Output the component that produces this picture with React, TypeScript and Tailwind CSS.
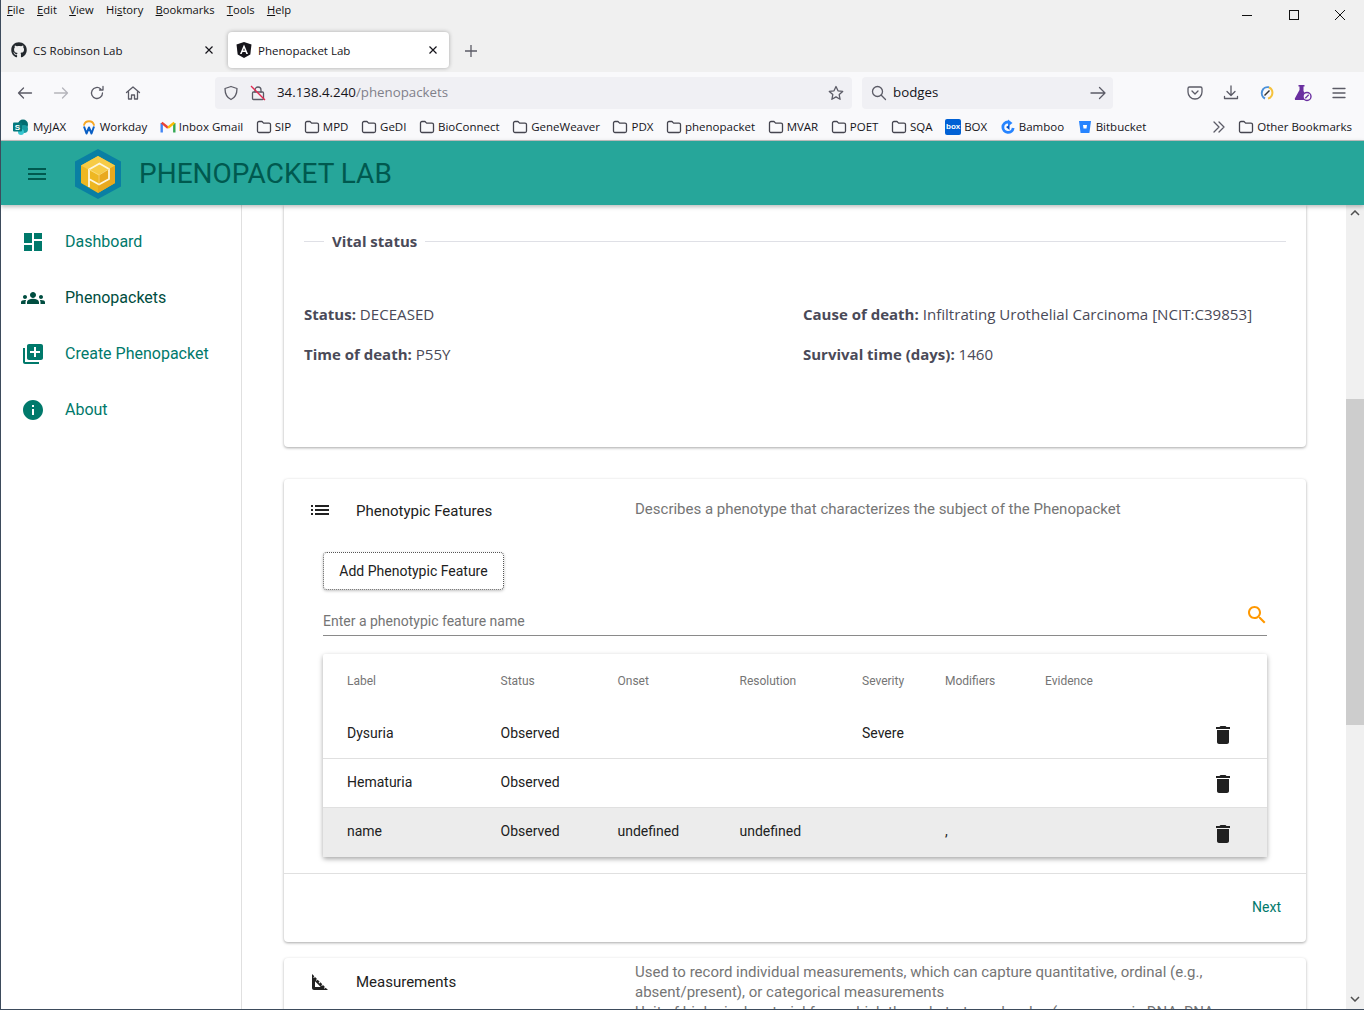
import React from "react";
import { FaGithub } from "react-icons/fa";

const P = ({ d, className = "", vb = "0 0 24 24" }: { d: string; className?: string; vb?: string }) => (
  <svg viewBox={vb} className={className} fill="currentColor"><path d={d} /></svg>
);

const ICONS = {
  dashboard: "M3 13h8V3H3v10zm0 8h8v-6H3v6zm10 0h8V11h-8v10zm0-18v6h8V3h-8z",
  groups: "M12 12.75c1.63 0 3.07.39 4.24.9 1.08.48 1.76 1.56 1.76 2.73V18H6v-1.61c0-1.18.68-2.26 1.76-2.73 1.17-.52 2.61-.91 4.24-.91zM4 13c1.1 0 2-.9 2-2s-.9-2-2-2-2 .9-2 2 .9 2 2 2zm1.13 1.1c-.37-.06-.74-.1-1.13-.1-.99 0-1.93.21-2.78.58C.48 14.9 0 15.62 0 16.43V18h4.5v-1.61c0-.83.23-1.61.63-2.29zM20 13c1.1 0 2-.9 2-2s-.9-2-2-2-2 .9-2 2 .9 2 2 2zm4 3.43c0-.81-.48-1.53-1.22-1.85-.85-.37-1.79-.58-2.78-.58-.39 0-.76.04-1.13.1.4.68.63 1.46.63 2.29V18H24v-1.57zM12 6c1.66 0 3 1.34 3 3s-1.34 3-3 3-3-1.34-3-3 1.34-3 3-3z",
  add: "M4 6H2v14c0 1.1.9 2 2 2h14v-2H4V6zm16-4H8c-1.1 0-2 .9-2 2v12c0 1.1.9 2 2 2h12c1.1 0 2-.9 2-2V4c0-1.1-.9-2-2-2zm-1 9h-4v4h-2v-4H9V9h4V5h2v4h4v2z",
  info: "M12 2C6.48 2 2 6.48 2 12s4.48 10 10 10 10-4.48 10-10S17.52 2 12 2zm1 15h-2v-6h2v6zm0-8h-2V7h2v2z",
  del: "M6 19c0 1.1.9 2 2 2h8c1.1 0 2-.9 2-2V7H6v12zM19 4h-3.5l-1-1h-5l-1 1H5v2h14V4z",
  list: "M3 13h2v-2H3v2zm0 4h2v-2H3v2zm0-8h2V7H3v2zm4 4h14v-2H7v2zm0 4h14v-2H7v2zM7 7v2h14V7H7z",
  search: "M15.5 14h-.79l-.28-.27C15.41 12.59 16 11.11 16 9.5 16 5.91 13.09 3 9.5 3S3 5.91 3 9.5 5.91 16 9.5 16c1.61 0 3.09-.59 4.23-1.57l.27.28v.79l5 4.99L20.49 19l-4.99-5zm-6 0C7.01 14 5 11.99 5 9.5S7.01 5 9.5 5 14 7.01 14 9.5 11.99 14 9.5 14z",
  foot: "M17.66 17.66l-1.06 1.06-.71-.71 1.06-1.06-1.94-1.94-1.06 1.06-.71-.71 1.06-1.06-1.94-1.94-1.06 1.06-.71-.71 1.06-1.06L9.7 9.7l-1.06 1.06-.71-.71 1.06-1.06-1.94-1.94-1.06 1.06-.71-.71 1.06-1.06L4 4v14c0 1.1.9 2 2 2h14l-2.34-2.34zM7 17v-5.76L12.76 17H7z",
};

const S = ({ children, className = "", vb = "0 0 16 16" }: { children: React.ReactNode; className?: string; vb?: string }) => (
  <svg viewBox={vb} className={className} fill="none" stroke="currentColor" strokeWidth="1.3" strokeLinecap="round" strokeLinejoin="round">{children}</svg>
);

const Folder = () => (
  <S className="w-4 h-4 shrink-0 text-[#45454f]">
    <path d="M1.5 4a1.5 1.5 0 0 1 1.5-1.5h3l1.6 1.6H13A1.5 1.5 0 0 1 14.5 5.6V12A1.5 1.5 0 0 1 13 13.5H3A1.5 1.5 0 0 1 1.5 12z" />
  </S>
);

const Bm = ({ icon, label, extra = "" }: { icon?: React.ReactNode; label: string; extra?: string }) => (
  <div className={`flex items-center gap-[3px] shrink-0 ${extra}`}>
    {icon ?? <Folder />}
    <span className="text-[11.5px] leading-none text-[#15141a]">{label}</span>
  </div>
);

const MyJax = () => (
  <svg viewBox="0 0 16 16" className="w-4 h-4 shrink-0">
    <circle cx="10" cy="5.5" r="5" fill="#036c70" />
    <circle cx="11" cy="10" r="4" fill="#1a9ba1" />
    <circle cx="8" cy="13" r="3" fill="#37c6d0" />
    <rect x="0" y="3.5" width="9" height="9" rx="1" fill="#03787c" />
    <text x="4.5" y="10.8" textAnchor="middle" fontSize="8" fontWeight="700" fill="#fff" fontFamily="Liberation Sans, sans-serif">S</text>
  </svg>
);
const Workday = () => (
  <svg viewBox="0 0 16 16" className="w-4 h-4 shrink-0" fill="none">
    <path d="M3 6a5.2 5.2 0 0 1 10 0" stroke="#f5a623" strokeWidth="1.8" strokeLinecap="round" />
    <path d="M3 7.500l2.500 7 2.500-6 2.500 6 2.500-7" stroke="#0a5fc4" strokeWidth="2" strokeLinejoin="round" />
  </svg>
);
const Gmail = () => (
  <svg viewBox="0 0 16 16" className="w-4 h-4 shrink-0" fill="none">
    <path d="M1.7 13.500V4" stroke="#4285f4" strokeWidth="2.4" />
    <path d="M14.3 13.500V4" stroke="#34a853" strokeWidth="2.4" />
    <path d="M1.700 3.600L8 8.800" stroke="#ea4335" strokeWidth="2.4" />
    <path d="M14.300 3.600L8 8.800" stroke="#fbbc04" strokeWidth="2.4" />
  </svg>
);
const BoxLogo = () => (
  <div className="w-4 h-4 shrink-0 rounded-[2px] bg-[#0061d5] flex items-center justify-center text-white text-[8px] font-bold leading-none font-['Liberation_Sans',sans-serif]">box</div>
);
const Bamboo = () => (
  <svg viewBox="0 0 16 16" className="w-4 h-4 shrink-0" fill="none">
    <path d="M8 3a5.200 5.200 0 1 0 5.200 6" stroke="#2684ff" strokeWidth="2.8" />
    <path d="M8 0.500l4.500 3.500L8 7.500z" fill="#2684ff" />
    <path d="M6 8l3.500-2v5z" fill="#0052cc" />
  </svg>
);
const Bitbucket = () => (
  <svg viewBox="0 0 16 16" className="w-4 h-4 shrink-0">
    <path d="M2 2h12l-1.600 12H3.600z" fill="#2684ff" />
    <path d="M6 6h4l-.5 3.500h-3z" fill="#fff" />
  </svg>
);

const Logo = () => (
  <svg viewBox="0 0 46 50" className="w-[46px] h-[50px] shrink-0">
    <polygon points="23,0 46,12.500 46,37.500 23,50 0,37.500 0,12.500" fill="#0a7fa3" />
    <polygon points="23,7 40,16.500 40,34 23,44 6,34 6,16.500" fill="#eeb722" />
    <polygon points="23,26 40,16.500 40,34 23,44" fill="#e9a91e" />
    <polygon points="23,26 6,16.500 23,7 40,16.500" fill="#f7cb45" />
    <path d="M14 38V20.500l10.500-6 9.500 5.500v10l-10 5.500-10-5.500" fill="none" stroke="#fdf6dc" strokeWidth="1.800" />
    <path d="M14 20.500l10 5.500 10-6M24 26v9.500" fill="none" stroke="#f9dd80" strokeWidth="0.800" />
  </svg>
);

const AngularIcon = () => (
  <svg viewBox="0 0 16 16" className="w-4 h-4 shrink-0">
    <polygon points="8,0 15.500,2.600 14.300,12.400 8,16 1.700,12.400 0.500,2.600" fill="#15141a" />
    <path d="M8 2.600L4 12h1.700l.8-2h3l.8 2H12zM7.100 8.600L8 6.300l.9 2.300z" fill="#fff" />
  </svg>
);

const WIDTHS = ["w-[177.5px] pl-6", "w-[117px]", "w-[122px]", "w-[122.5px]", "w-[83px]", "w-[100px]", "w-[100px]"];

const Tr = ({ cols, shade, border }: { cols: string[]; shade?: boolean; border?: boolean }) => (
  <div className={`relative flex items-center h-[49px] pb-[2px] text-[14px] text-[#212121] ${shade ? "bg-[#ececec]" : ""} ${border ? "border-b border-[#e0e0e0]" : ""}`}>
    {cols.map((c, i) => (
      <div key={i} className={WIDTHS[i]}>{c}</div>
    ))}
    <P d={ICONS.del} className="w-6 h-6 ml-auto mr-[32px] mt-[4px] text-[#212121]" />
  </div>
);

const Nav = ({ d, label, cls }: { d: string; label: string; cls: string }) => (
  <div className="flex items-center h-14">
    <div className="w-[64px] flex justify-center">
      <P d={d} className={`w-6 h-6 ${cls}`} />
    </div>
    <span className={`text-[16px] ${cls}`}>{label}</span>
  </div>
);

const bookmarks: { label: string; icon?: React.ReactNode; extra?: string }[] = [
  { label: "MyJAX", icon: <MyJax />, extra: "gap-[4px]" },
  { label: "Workday", icon: <Workday />, extra: "ml-[2px]" },
  { label: "Inbox Gmail", icon: <Gmail /> },
  { label: "SIP" }, { label: "MPD" }, { label: "GeDI" }, { label: "BioConnect" }, { label: "GeneWeaver" },
  { label: "PDX" }, { label: "phenopacket" }, { label: "MVAR" }, { label: "POET" }, { label: "SQA" },
  { label: "BOX", icon: <BoxLogo /> },
  { label: "Bamboo", icon: <Bamboo /> },
  { label: "Bitbucket", icon: <Bitbucket /> },
];

export default function App() {
  return (
    <div className="w-[1364px] h-[1010px] overflow-hidden flex flex-col bg-white border-l border-b border-[#3d4b5c] font-['Roboto',sans-serif]">
      {/* title + menu */}
      <div className="h-[72px] bg-[#f0f0f0] shrink-0 flex flex-col font-['Open_Sans',sans-serif]">
        <div className="h-[32px] flex items-start relative">
          <div className="flex gap-[12.300px] pl-[6px] pt-[1px] text-[11.200px] leading-[17px] text-[#111]">
            <span><u>F</u>ile</span>
            <span><u>E</u>dit</span>
            <span><u>V</u>iew</span>
            <span>Hi<u>s</u>tory</span>
            <span><u>B</u>ookmarks</span>
            <span><u>T</u>ools</span>
            <span><u>H</u>elp</span>
          </div>
          <div className="ml-auto flex items-center pt-[9px] pr-[18px] gap-[34.500px] text-[#111]">
            <svg viewBox="0 0 12 12" className="w-3 h-3" fill="none" stroke="currentColor"><path d="M1 6.500h10" /></svg>
            <svg viewBox="0 0 12 12" className="w-3 h-3" fill="none" stroke="currentColor"><rect x="1.500" y="1.500" width="9" height="9" /></svg>
            <svg viewBox="0 0 12 12" className="w-3 h-3" fill="none" stroke="currentColor"><path d="M1 1l10 10M11 1L1 11" /></svg>
          </div>
        </div>
        <div className="flex items-start">
          <div className="w-[222px] h-[36px] flex items-center pl-[10px] text-[11.500px] text-[#15141a]">
            <FaGithub className="w-4 h-4 mr-[6px] text-[#24292e]" />
            <span className="mt-[1px]">CS Robinson Lab</span>
            <svg viewBox="0 0 12 12" className="w-3 h-3 ml-auto mr-[8px]" fill="none" stroke="#15141a" strokeWidth="1.200"><path d="M2.500 2.500l7 7M9.500 2.500l-7 7" /></svg>
          </div>
          <div className="ml-[5px] w-[221px] h-[36px] bg-white rounded-[4px] shadow-[0_0_4px_rgba(0,0,0,0.3)] flex items-center pl-2 text-[11.500px] text-[#15141a]">
            <AngularIcon />
            <span className="ml-[6px] mt-[1px]">Phenopacket Lab</span>
            <svg viewBox="0 0 12 12" className="w-3 h-3 ml-auto mr-[10px]" fill="none" stroke="#15141a" strokeWidth="1.200"><path d="M2.500 2.500l7 7M9.500 2.500l-7 7" /></svg>
          </div>
          <svg viewBox="0 0 16 16" className="w-4 h-4 ml-[14px] mt-[11px]" fill="none" stroke="#5b5b66" strokeWidth="1.300"><path d="M8 2v12M2 8h12" /></svg>
        </div>
      </div>

      {/* nav */}
      <div className="h-[41px] bg-[#f9f9fb] shrink-0 flex items-center font-['Open_Sans',sans-serif]">
        <div className="w-[214px] flex items-center pl-4 gap-[20px] text-[#5b5b66]">
          <S className="w-4 h-4"><path d="M14.500 8h-13M6.500 3l-5 5 5 5" /></S>
          <S className="w-4 h-4 text-[#b5b5bb]"><path d="M1.500 8h13M9.500 3l5 5-5 5" /></S>
          <S className="w-4 h-4"><path d="M13.500 8a5.500 5.500 0 1 1-1.800-4.100M14 1.500v3.500h-3.500" /></S>
          <S className="w-4 h-4"><path d="M1.500 7.500L8 2l6.500 5.500M3.500 6.500V14h3v-4h3v4h3V6.500" /></S>
        </div>
        <div className="w-[637px] h-[32px] rounded-[4px] bg-[#f0f0f4] flex items-center pl-[8px] pr-2 text-[#5b5b66]">
          <S className="w-4 h-4 shrink-0"><path d="M8 1.500l6 2c0 5.500-1.500 9-6 11-4.500-2-6-5.500-6-11z" /></S>
          <span className="relative w-4 h-4 ml-[11px] shrink-0">
            <S className="w-4 h-4"><rect x="2.500" y="7" width="11" height="7.500" rx="1" /><path d="M5 7V5a3 3 0 0 1 6 0v2" /></S>
            <svg viewBox="0 0 16 16" className="absolute inset-0 w-4 h-4" fill="none" stroke="#e22850" strokeWidth="1.300"><path d="M1 1l14 14" /></svg>
          </span>
          <span className="ml-[11px] mt-[1px] text-[13.300px] text-[#15141a]">34.138.4.240<span className="text-[#80808a]">/phenopackets</span></span>
          <S className="w-4 h-4 ml-auto"><path d="M8 1.500l2 4.300 4.700.6-3.500 3.200.9 4.700L8 11.900l-4.100 2.400.9-4.700L1.300 6.400 6 5.800z" /></S>
        </div>
        <div className="ml-[10px] w-[251px] h-[32px] rounded-[4px] bg-[#f0f0f4] flex items-center pl-[9px] pr-[7px] text-[#5b5b66]">
          <S className="w-4 h-4 shrink-0"><circle cx="6.500" cy="6.500" r="5" /><path d="M10.300 10.300l4.200 4.200" /></S>
          <span className="ml-[6px] mt-[1px] text-[13.300px] text-[#15141a]">bodges</span>
          <S className="w-4 h-4 ml-auto"><path d="M1 8h14M9.500 2.500L15 8l-5.500 5.500" /></S>
        </div>
        <div className="flex items-center ml-[74px] gap-[20px] text-[#5b5b66]">
          <S className="w-4 h-4"><path d="M2.500 2h11A1.500 1.500 0 0 1 15 3.500V7a7 7 0 0 1-14 0V3.500A1.500 1.500 0 0 1 2.500 2zM5 6l3 3 3-3" /></S>
          <S className="w-4 h-4"><path d="M8 1v9M4 6.500L8 10.500 12 6.500M1.500 11.500v2h13v-2" /></S>
          <svg viewBox="0 0 16 16" className="w-4 h-4" fill="none" strokeWidth="2">
            <path d="M6 13.500A6 6 0 0 1 10 2.300" stroke="#4a90d9" />
            <path d="M10 2.300A6 6 0 0 1 9 13.500" stroke="#f5c23c" />
            <path d="M5.500 10.500l5-5" stroke="#333" strokeWidth="1.500" />
          </svg>
          <svg viewBox="0 0 18 18" className="w-[18px] h-[18px] -mx-[1px]" fill="#6a2fa0">
            <path d="M4.500 1h6v1.500H9.500v4.500l2 3.500-1.500 5.500H1l-.2-1.500 4.700-8.500V2.500h-1z" />
            <circle cx="13" cy="12.500" r="4" fill="#f9f9fb" stroke="#6a2fa0" strokeWidth="1.400" />
            <path d="M11.300 14.200l3.400-3.400" stroke="#6a2fa0" strokeWidth="1.300" />
          </svg>
          <S className="w-4 h-4"><path d="M2 3.500h12M2 8h12M2 12.500h12" /></S>
        </div>
      </div>

      {/* bookmarks */}
      <div className="h-[27px] bg-[#f9f9fb] shrink-0 flex items-center pl-[12px] pr-[12px] gap-[12.600px] font-['Open_Sans',sans-serif]">
        {bookmarks.map((b) => <Bm key={b.label} label={b.label} icon={b.icon} extra={b.extra} />)}
        <S className="w-4 h-4 ml-auto text-[#5b5b66]"><path d="M3 3l5 5-5 5M8 3l5 5-5 5" /></S>
        <div className="ml-[-1px]"><Bm label="Other Bookmarks" /></div>
      </div>

      {/* app header */}
      <div className="relative z-10 h-[65px] bg-[#26a69a] border-t border-[#b9b9b9] shrink-0 flex items-center pt-[2px] shadow-[0_2px_4px_rgba(0,0,0,0.25)]">
        <svg viewBox="0 0 24 24" className="w-6 h-6 ml-[24px] text-[#00594f]" fill="currentColor"><path d="M3 18h18v-2H3v2zm0-5h18v-2H3v2zm0-7v2h18V6H3z" /></svg>
        <div className="ml-[26px]"><Logo /></div>
        <span className="ml-[18px] text-[28px] text-[#00594f] leading-none">PHENOPACKET LAB</span>
      </div>

      {/* body */}
      <div className="flex flex-1 min-h-0">
        <aside className="w-[241px] shrink-0 border-r border-[#e0e0e0] pt-[9px]">
          <Nav d={ICONS.dashboard} label="Dashboard" cls="text-[#00796b]" />
          <Nav d={ICONS.groups} label="Phenopackets" cls="text-[#004d40]" />
          <Nav d={ICONS.add} label="Create Phenopacket" cls="text-[#00796b]" />
          <Nav d={ICONS.info} label="About" cls="text-[#00796b]" />
        </aside>

        <main className="flex-1 min-w-0 overflow-hidden pl-[42px] pr-[40px] flex flex-col">
          {/* vital status */}
          <div className="h-[242px] shrink-0 bg-white rounded-b-[4px] shadow-[0_1px_3px_rgba(0,0,0,0.35)] px-5 text-[#4a4a58] text-[15.100px] font-['Open_Sans',sans-serif]">
            <div className="flex items-center pt-[26px] h-[47px]">
              <div className="w-5 h-px bg-[#dfe0e6] mt-[-1px]" />
              <span className="mx-2 font-bold text-[15px]">Vital status</span>
              <div className="flex-1 h-px bg-[#dfe0e6] mt-[-1px]" />
            </div>
            <div className="grid grid-cols-[499px_1fr] gap-y-[18px] pt-[51px] leading-[22px]">
              <div><b className="text-[15px]">Status:</b> DECEASED</div>
              <div><b className="text-[15px]">Cause of death:</b> Infiltrating Urothelial Carcinoma [NCIT:C39853]</div>
              <div><b className="text-[15px]">Time of death:</b> P55Y</div>
              <div><b className="text-[15px]">Survival time (days):</b> 1460</div>
            </div>
          </div>

          {/* phenotypic features */}
          <div className="mt-8 h-[463px] shrink-0 bg-white rounded-[4px] shadow-[0_1px_3px_rgba(0,0,0,0.35)] flex flex-col">
            <div className="flex pt-[20px] h-[73px]">
              <P d={ICONS.list} className="w-6 h-6 ml-6 mt-[-1px] text-[#212121]" />
              <span className="ml-[24px] w-[279px] text-[15px] leading-6 text-[#212121]">Phenotypic Features</span>
              <span className="text-[15px] leading-5 text-[#757575]">Describes a phenotype that characterizes the subject of the Phenopacket</span>
            </div>
            <div className="px-[39px]">
              <button className="h-[38px] w-[181px] rounded-[4px] border border-dotted border-[#555] bg-white text-[14px] text-[#212121] shadow-[0_1px_3px_rgba(0,0,0,0.25)]">Add Phenotypic Feature</button>
              <div className="relative mt-[17px] h-[29px] border-b border-[#8a8a8a] flex items-center text-[14px] text-[#757575]">
                <span className="mt-[1px]">Enter a phenotypic feature name</span>
                <P d={ICONS.search} className="absolute right-[-2px] top-[-4px] w-6 h-6 text-[#ff9800]" />
              </div>
              <div className="mt-[18px] rounded-[2px] shadow-[0_2px_5px_rgba(0,0,0,0.35)]">
                <div className="flex items-center h-[56px] pb-[3px] text-[12px] text-[#757575]">
                  {["Label", "Status", "Onset", "Resolution", "Severity", "Modifiers", "Evidence"].map((h, i) => (
                    <div key={h} className={WIDTHS[i]}>{h}</div>
                  ))}
                </div>
                <Tr cols={["Dysuria", "Observed", "", "", "Severe", "", ""]} border />
                <Tr cols={["Hematuria", "Observed", "", "", "", "", ""]} border />
                <Tr cols={["name", "Observed", "undefined", "undefined", "", ",", ""]} shade />
              </div>
            </div>
            <div className="mt-[16px] border-t border-[#e0e0e0] flex-1 flex items-center justify-end pr-[25px] text-[14px] font-normal text-[#00796b]">
              <span className="mt-[-2px]">Next</span>
            </div>
          </div>

          {/* measurements */}
          <div className="mt-4 h-[120px] shrink-0 bg-white rounded-t-[4px] shadow-[0_1px_3px_rgba(0,0,0,0.3)] flex pt-[4px]">
            <P d={ICONS.foot} className="w-6 h-6 ml-6 mt-[8px] text-[#212121]" />
            <span className="ml-[24px] w-[279px] text-[15px] leading-6 mt-[8px] text-[#212121]">Measurements</span>
            <div className="text-[15px] leading-5 w-[620px] text-[#757575]">
              <div>Used to record individual measurements, which can capture quantitative, ordinal (e.g., absent/present), or categorical measurements</div>
              <div>Unit of biological material from which the substrate molecules (e.g. genomic DNA, RNA...</div>
            </div>
          </div>
        </main>

        {/* scrollbar */}
        <div className="w-[18px] shrink-0 bg-[#f0f0f0] flex flex-col items-center">
          <svg viewBox="0 0 10 6" className="w-[10px] h-[6px] mt-[5px]" fill="none" stroke="#505050" strokeWidth="1.500"><path d="M1 5l4-4 4 4" /></svg>
          <div className="mt-[183px] w-full h-[326px] bg-[#cdcdcd]" />
          <svg viewBox="0 0 10 6" className="w-[10px] h-[6px] mt-[271px]" fill="none" stroke="#505050" strokeWidth="1.500"><path d="M1 1l4 4 4-4" /></svg>
        </div>
      </div>
    </div>
  );
}
